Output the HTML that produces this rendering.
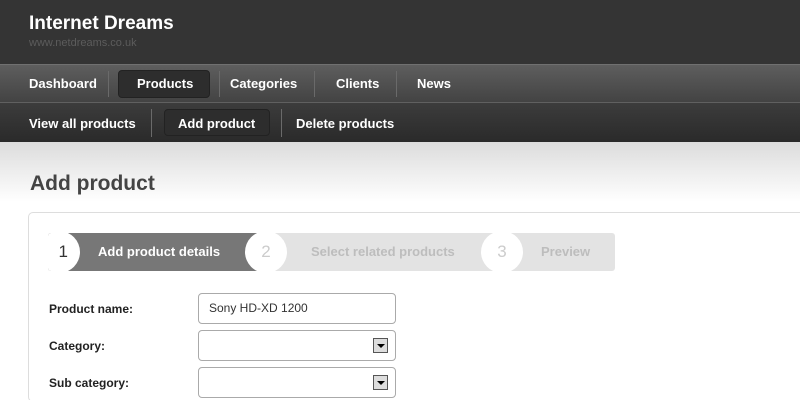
<!DOCTYPE html>
<html style="width:800px;height:400px;overflow:hidden"><head><style>
*{margin:0;padding:0;box-sizing:border-box}
body{width:800px;height:400px;overflow:hidden;background:#fff;font-family:"Liberation Sans",sans-serif;position:relative}
.hdr{position:absolute;left:0;top:0;width:800px;height:64px;background:#343434}
.hdr h1{position:absolute;left:29px;top:13px;font-size:19px;color:#fff;font-weight:bold}
.hdr span{position:absolute;left:29px;top:37px;font-size:11px;color:#5c5c5c}
.n1{position:absolute;left:0;top:64px;width:800px;height:38px;background:linear-gradient(#5e5e5e,#434343);border-top:1px solid #707070}
.n2{position:absolute;left:0;top:102px;width:800px;height:40px;background:linear-gradient(#3c3c3c,#2a2a2a);border-top:1px solid #606060}
.it{position:absolute;color:#fff;font-weight:bold;font-size:13px}
.sep{position:absolute;width:1px;background:#4f4f4f;border-right:1px solid #6a6a6a}
.act{position:absolute;border-radius:4px;background:#2d2d2d;border:1px solid #222}
.cont{position:absolute;left:0;top:142px;width:800px;height:60px;background:linear-gradient(#dcdcdc,#fff)}
.title{position:absolute;left:30px;top:172px;font-size:21px;color:#444;font-weight:bold}
.box{position:absolute;left:28px;top:212px;width:800px;height:190px;border:1px solid #ddd;border-radius:5px;background:#fff}
.steps{position:absolute;left:48px;top:233px;width:567px;height:38px;background:#e3e3e3;border-radius:3px;overflow:hidden}
.circ{position:absolute;top:-2px;width:42px;height:42px;border-radius:50%;background:#fff;font-size:17px;text-align:center;line-height:42px}
.lbl{position:absolute;left:49px;font-size:12px;font-weight:bold;color:#222}
.inp{position:absolute;left:198px;width:198px;border:1px solid #aaa;border-radius:4px;background:#fff;font-size:12px;color:#333;padding-left:10px}
.dd{position:absolute;right:7px;top:7px;width:15px;height:15px;border:1px solid #555;background:#ddd}
.dd:after{content:"";position:absolute;left:3px;top:5px;border:4px solid transparent;border-top:4px solid #000}
</style></head><body>
<div class="hdr"><h1>Internet Dreams</h1><span>www.netdreams.co.uk</span></div>
<div class="n1">
<div class="act" style="left:118px;top:5px;width:92px;height:28px"></div>
<div class="it" style="left:29px;top:11px">Dashboard</div>
<div class="sep" style="left:108px;top:6px;height:26px"></div>
<div class="it" style="left:137px;top:11px">Products</div>
<div class="sep" style="left:219px;top:6px;height:26px"></div>
<div class="it" style="left:230px;top:11px">Categories</div>
<div class="sep" style="left:314px;top:6px;height:26px"></div>
<div class="it" style="left:336px;top:11px">Clients</div>
<div class="sep" style="left:396px;top:6px;height:26px"></div>
<div class="it" style="left:417px;top:11px">News</div>
</div>
<div class="n2">
<div class="act" style="left:164px;top:6px;width:106px;height:27px"></div>
<div class="it" style="left:29px;top:13px">View all products</div>
<div class="sep" style="left:151px;top:6px;height:28px"></div>
<div class="it" style="left:178px;top:13px">Add product</div>
<div class="sep" style="left:281px;top:6px;height:28px"></div>
<div class="it" style="left:296px;top:13px">Delete products</div>
</div>
<div class="cont"></div>
<div class="title">Add product</div>
<div class="box"></div>
<div class="steps">
<div style="position:absolute;left:0;top:0;width:215px;height:38px;background:#777"></div>
<div class="circ" style="left:-10px;color:#333;text-align:right;padding-right:12px;width:42px">1</div>
<div class="it" style="left:50px;top:11px;font-size:13px">Add product details</div>
<div class="circ" style="left:197px;color:#ccc">2</div>
<div class="it" style="left:263px;top:11px;color:#bdbdbd">Select related products</div>
<div class="circ" style="left:433px;color:#ccc">3</div>
<div class="it" style="left:493px;top:11px;color:#bdbdbd">Preview</div>
</div>
<div class="lbl" style="top:302px">Product name:</div>
<div class="inp" style="top:293px;height:31px;line-height:29px">Sony HD-XD 1200</div>
<div class="lbl" style="top:339px">Category:</div>
<div class="inp" style="top:330px;height:31px"><div class="dd"></div></div>
<div class="lbl" style="top:376px">Sub category:</div>
<div class="inp" style="top:367px;height:31px"><div class="dd"></div></div>
</body></html>
